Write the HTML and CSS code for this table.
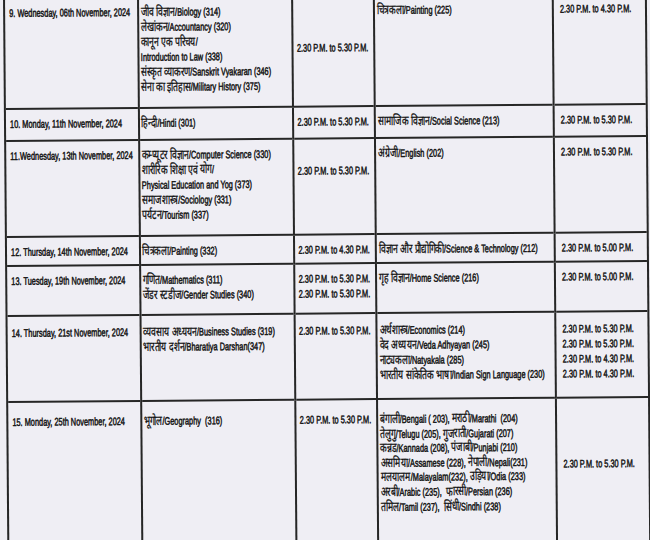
FILE: index.html
```html
<!DOCTYPE html>
<html lang="hi">
<head>
<meta charset="utf-8">
<title>Date Sheet</title>
<link rel="stylesheet" href="styles.css">
</head>
<body>
<div class="sheet">
<table class="tt">
<colgroup>
<col class="c1"><col class="c2"><col class="c3"><col class="c4"><col class="c5">
</colgroup>
<tbody>
<tr class="r9">
<td class="date">9. Wednesday, 06th November, 2024</td>
<td class="subj">
<div><span class="hi">जीव विज्ञान</span>/Biology (314)</div>
<div><span class="hi">लेखांकन</span>/Accountancy (320)</div>
<div><span class="hi">कानून एक परिचय</span>/</div>
<div>Introduction to Law (338)</div>
<div><span class="hi">संस्कृत व्याकरण</span>/Sanskrit Vyakaran (346)</div>
<div><span class="hi">सेना का इतिहास</span>/Military History (375)</div>
</td>
<td class="time mid">2.30 P.M. to 5.30 P.M.</td>
<td class="subj2"><span class="hi">चित्रकला</span>/Painting (225)</td>
<td class="time end">2.30 P.M. to 4.30 P.M.</td>
</tr>
<tr class="r10">
<td class="date">10. Monday, 11th November, 2024</td>
<td class="subj"><span class="hi">हिन्दी</span>/Hindi (301)</td>
<td class="time">2.30 P.M. to 5.30 P.M.</td>
<td class="subj2"><span class="hi">सामाजिक विज्ञान</span>/Social Science (213)</td>
<td class="time end">2.30 P.M. to 5.30 P.M.</td>
</tr>
<tr class="r11">
<td class="date">11.Wednesday, 13th November, 2024</td>
<td class="subj">
<div><span class="hi">कम्प्यूटर विज्ञान</span>/Computer Science (330)</div>
<div><span class="hi">शारीरिक शिक्षा एवं योग</span>/</div>
<div>Physical Education and Yog (373)</div>
<div><span class="hi">समाजशास्त्र</span>/Sociology (331)</div>
<div><span class="hi">पर्यटन</span>/Tourism (337)</div>
</td>
<td class="time down1">2.30 P.M. to 5.30 P.M.</td>
<td class="subj2"><span class="hi">अंग्रेजी</span>/English (202)</td>
<td class="time end">2.30 P.M. to 5.30 P.M.</td>
</tr>
<tr class="r12">
<td class="date">12. Thursday, 14th November, 2024</td>
<td class="subj"><span class="hi">चित्रकला</span>/Painting (332)</td>
<td class="time">2.30 P.M. to 4.30 P.M.</td>
<td class="subj2"><span class="hi">विज्ञान और प्रौद्योगिकी</span>/Science &amp; Technology (212)</td>
<td class="time end">2.30 P.M. to 5.00 P.M.</td>
</tr>
<tr class="r13">
<td class="date">13. Tuesday, 19th November, 2024</td>
<td class="subj">
<div><span class="hi">गणित</span>/Mathematics (311)</div>
<div><span class="hi">जेंडर स्टडीज</span>/Gender Studies (340)</div>
</td>
<td class="time">
<div>2.30 P.M. to 5.30 P.M.</div>
<div>2.30 P.M. to 5.30 P.M.</div>
</td>
<td class="subj2"><span class="hi">गृह विज्ञान</span>/Home Science (216)</td>
<td class="time end">2.30 P.M. to 5.00 P.M.</td>
</tr>
<tr class="r14">
<td class="date">14. Thursday, 21st November, 2024</td>
<td class="subj">
<div><span class="hi">व्यवसाय अध्ययन</span>/Business Studies (319)</div>
<div><span class="hi">भारतीय दर्शन</span>/Bharatiya Darshan(347)</div>
</td>
<td class="time">2.30 P.M. to 5.30 P.M.</td>
<td class="subj2">
<div><span class="hi">अर्थशास्त्र</span>/Economics (214)</div>
<div><span class="hi">वेद अध्ययन</span>/Veda Adhyayan (245)</div>
<div><span class="hi">नाट्यकला</span>/Natyakala (285)</div>
<div><span class="hi">भारतीय सांकेतिक भाषा</span>/Indian Sign Language (230)</div>
</td>
<td class="time end">
<div>2.30 P.M. to 5.30 P.M.</div>
<div>2.30 P.M. to 5.30 P.M.</div>
<div>2.30 P.M. to 4.30 P.M.</div>
<div>2.30 P.M. to 4.30 P.M.</div>
</td>
</tr>
<tr class="r15">
<td class="date">15. Monday, 25th November, 2024</td>
<td class="subj"><span class="hi">भूगोल</span>/Geography&nbsp; (316)</td>
<td class="time">2.30 P.M. to 5.30 P.M.</td>
<td class="subj2 tight">
<div><span class="hi">बंगाली</span>/Bengali ( 203), <span class="hi">मराठी</span>/Marathi&nbsp; (204)</div>
<div><span class="hi">तेलुगु</span>/Telugu (205), <span class="hi">गुजराती</span>/Gujarati (207)</div>
<div><span class="hi">कन्नड</span>/Kannada (208), <span class="hi">पंजाबी</span>/Punjabi (210)</div>
<div><span class="hi">असमिया</span>/Assamese (228), <span class="hi">नेपाली</span>/Nepali(231)</div>
<div><span class="hi">मलयालम</span>/Malayalam(232), <span class="hi">उड़िया</span>/Odia (233)</div>
<div><span class="hi">अरबी</span>/Arabic (235),&nbsp; <span class="hi">फारसी</span>/Persian (236)</div>
<div><span class="hi">तमिल</span>/Tamil (237),&nbsp; <span class="hi">सिंधी</span>/Sindhi (238)</div>
</td>
<td class="time end down3">2.30 P.M. to 5.30 P.M.</td>
</tr>
</tbody>
</table>
</div>
</body>
</html>
```

FILE: styles.css
```css
html, body {
  margin: 0;
  padding: 0;
  background: #efeef4;
}

body {
  height: 540px;
  overflow: hidden;
}

/* The scanned sheet: text set in a narrow face, page slightly skewed */
.sheet {
  width: 958px;
  margin: -3px 0 0 3px;
  transform: rotate(-0.45deg) scaleX(0.67);
  transform-origin: 0 0;
}

.tt {
  width: 958px;
  border-collapse: collapse;
  table-layout: fixed;
  font-family: "Liberation Sans", Arial, sans-serif;
  font-size: 11px;
  line-height: 15px;
  color: #121212;
  -webkit-text-stroke: 0.5px #121212;
}

.c1 { width: 200px; }
.c2 { width: 230px; }
.c3 { width: 122px; }
.c4 { width: 267px; }
.c5 { width: 139px; }

.tt td {
  border-style: solid;
  border-color: #262626;
  border-width: 2px 3px;
  padding: 7px 6px 5px 6px;
  vertical-align: top;
  white-space: nowrap;
  overflow: hidden;
}

.tt td.subj {
  padding-left: 2px;
}

.tt td.subj2 {
  padding-left: 3px;
}

.tt td.time {
  padding-left: 5px;
}

.tt td.end {
  padding-left: 9px;
}

.tt td.mid {
  vertical-align: middle;
  padding-bottom: 14px;
}

.tt td.down1 {
  padding-top: 24px;
}

.tt td.tight {
  line-height: 14.6px;
}

.hi {
  font-size: 13px;
  line-height: 0;
  -webkit-text-stroke: 0.3px #121212;
}

.r9 { height: 111px; }
.r10 { height: 32px; }
.r11 { height: 96px; }
.r12 { height: 27px; }
.r13 { height: 50px; }
.r14 { height: 86px; }
.r15 { height: 170px; }

.r14 td {
  padding-top: 9px;
}

.r15 td {
  padding-top: 12px;
}

.r15 td.down3 {
  padding-top: 58px;
}
```
